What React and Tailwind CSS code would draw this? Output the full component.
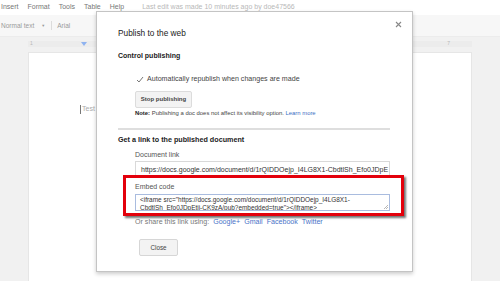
import React from 'react';

const Ruler = () => (
    <div className="relative h-[6px] mx-[28px] mt-[4px] bg-[#ececec] flex items-center justify-between px-[2px] text-[5px] text-[#b8b8b8]">
        <span>1</span>
        <span className="ml-[48px] w-0 h-0 border-l-[3px] border-r-[3px] border-t-[4px] border-l-transparent border-r-transparent border-t-[#8fb3f0]"></span>
        <span className="flex-1"></span>
        <span className="mr-[48px] w-0 h-0 border-l-[3px] border-r-[3px] border-t-[4px] border-l-transparent border-r-transparent border-t-[#8fb3f0]"></span>
        <span className="mr-[20px]">7</span>
    </div>
);

export default function App() {
    return (
        <div className="relative w-[500px] h-[281px] overflow-hidden bg-[#f1f1f1] font-['Liberation_Sans',Arial,sans-serif]">
            {/* Menu bar */}
            <div className="flex items-center h-[15px] gap-[9px] pl-[1px] bg-white text-[7px] text-[#777]">
                <span>Insert</span>
                <span>Format</span>
                <span>Tools</span>
                <span>Table</span>
                <span>Help</span>
                <span className="ml-[9px] text-[#b8b8b8]">Last edit was made 10 minutes ago by doe47566</span>
            </div>

            {/* Toolbar */}
            <div className="flex items-center h-[22px] bg-[#f7f7f7] border-b border-[#ececec] text-[6.5px] text-[#9a9a9a]">
                <span className="pl-[1px]">Normal text</span>
                <span className="ml-[7px] text-[4px]">▼</span>
                <span className="ml-[6px] w-px h-[9px] bg-[#dcdcdc]"></span>
                <span className="ml-[5px]">Arial</span>
            </div>

            <Ruler />

            {/* Page */}
            <div className="mx-[28px] mt-[5px] h-[240px] bg-white border border-[#e6e6e6] pt-[51px] pl-[51px]">
                <div className="flex items-center text-[7px] text-[#aaa]">
                    <span className="w-px h-[9px] bg-[#777] mr-px"></span>
                    <span>Test</span>
                </div>
            </div>

            {/* Dialog */}
            <div className="absolute left-[96px] top-[11px] w-[317px] h-[261px] bg-white border border-[#c4c4c4] shadow-[0_2px_4px_rgba(0,0,0,0.2)] pt-[16px] pl-[21px] pr-[22px] text-[#333]">
                <svg className="absolute right-[10px] top-[9px]" width="7" height="7" viewBox="0 0 7 7">
                    <path d="M1 1L6 6M6 1L1 6" stroke="#888" strokeWidth="1.1" />
                </svg>

                <div className="text-[8.3px] leading-[10px] text-[#222]">Publish to the web</div>

                <div className="mt-[14px] text-[7px] leading-[8px] font-bold text-[#222]">Control publishing</div>

                <div className="pl-[17px]">
                    <div className="mt-[15px] flex items-center text-[7.1px] leading-[8px] text-[#444]">
                        <svg width="8" height="7" viewBox="0 0 8 7" className="ml-[1px] mr-[3px]">
                            <path d="M1 4L3 6L7 1" stroke="#777" strokeWidth="1" fill="none" />
                        </svg>
                        <span>Automatically republish when changes are made</span>
                    </div>

                    <div className="mt-[8px] w-[57px] h-[17px] flex items-center justify-center bg-[#f3f3f3] border border-[#dcdcdc] rounded-[2px] text-[6px] font-bold text-[#444]">
                        Stop publishing
                    </div>

                    <div className="mt-[2px] text-[5.9px] leading-[7px] text-[#444]">
                        <span className="font-bold text-[#222]">Note:</span> Publishing a doc does not affect its visibility option. <span className="text-[#3d6fc4]">Learn more</span>
                    </div>
                </div>

                <div className="mt-[11px] h-[2px] bg-[#dedede]"></div>

                <div className="mt-[6px] text-[7.2px] leading-[8px] font-bold text-[#222]">Get a link to the published document</div>

                <div className="pl-[17px]">
                    <div className="mt-[7px] text-[7px] leading-[8px] text-[#555]">Document link</div>
                    <div className="mt-[2px] h-[17px] border border-[#d9d9d9] overflow-hidden whitespace-nowrap pl-[5px] pt-[4px] text-[7px] leading-[8px] text-[#333]">
                        https://docs.google.com/document/d/1rQIDDOejp_I4LG8X1-CbdtlSh_Efo0JDpE
                    </div>

                    <div className="mt-[5px] text-[7px] leading-[8px] text-[#555]">Embed code</div>
                    <div className="relative mt-[3px] h-[17px] border border-[#a9bcdf] overflow-hidden pl-[4px] pr-[20px] pt-[1px] text-[6.45px] leading-[8px] text-[#333]">
                        <div className="whitespace-nowrap">&lt;iframe src="https://docs.google.com/document/d/1rQIDDOejp_I4LG8X1-</div>
                        <div className="whitespace-nowrap">CbdtlSh_Efo0JDpEtij-CK9zA/pub?embedded=true"&gt;&lt;/iframe&gt;</div>
                        <svg className="absolute right-px bottom-px" width="5" height="5" viewBox="0 0 5 5">
                            <path d="M5 1L1 5M5 3L3 5" stroke="#999" strokeWidth="0.7" />
                        </svg>
                    </div>

                    <div className="mt-[7px] flex gap-[4px] text-[7.1px] leading-[8px] text-[#777]">
                        <span>Or share this link using:</span>
                        <span className="text-[#4a72c8]">Google+</span>
                        <span className="text-[#4a72c8]">Gmail</span>
                        <span className="text-[#4a72c8]">Facebook</span>
                        <span className="text-[#4a72c8]">Twitter</span>
                    </div>
                </div>

                <div className="ml-[21px] mt-[13px] w-[39px] h-[17px] flex items-center justify-center bg-[#f3f3f3] border border-[#d6d6d6] rounded-[2px] text-[6.3px] text-[#444]">
                    Close
                </div>
            </div>

            {/* Red highlight annotation */}
            <div className="absolute left-[123px] top-[175px] w-[281px] h-[41px] border-[3px] border-[#e3000b] shadow-[2px_2px_2px_rgba(0,0,0,0.55)]"></div>
        </div>
    );
}
